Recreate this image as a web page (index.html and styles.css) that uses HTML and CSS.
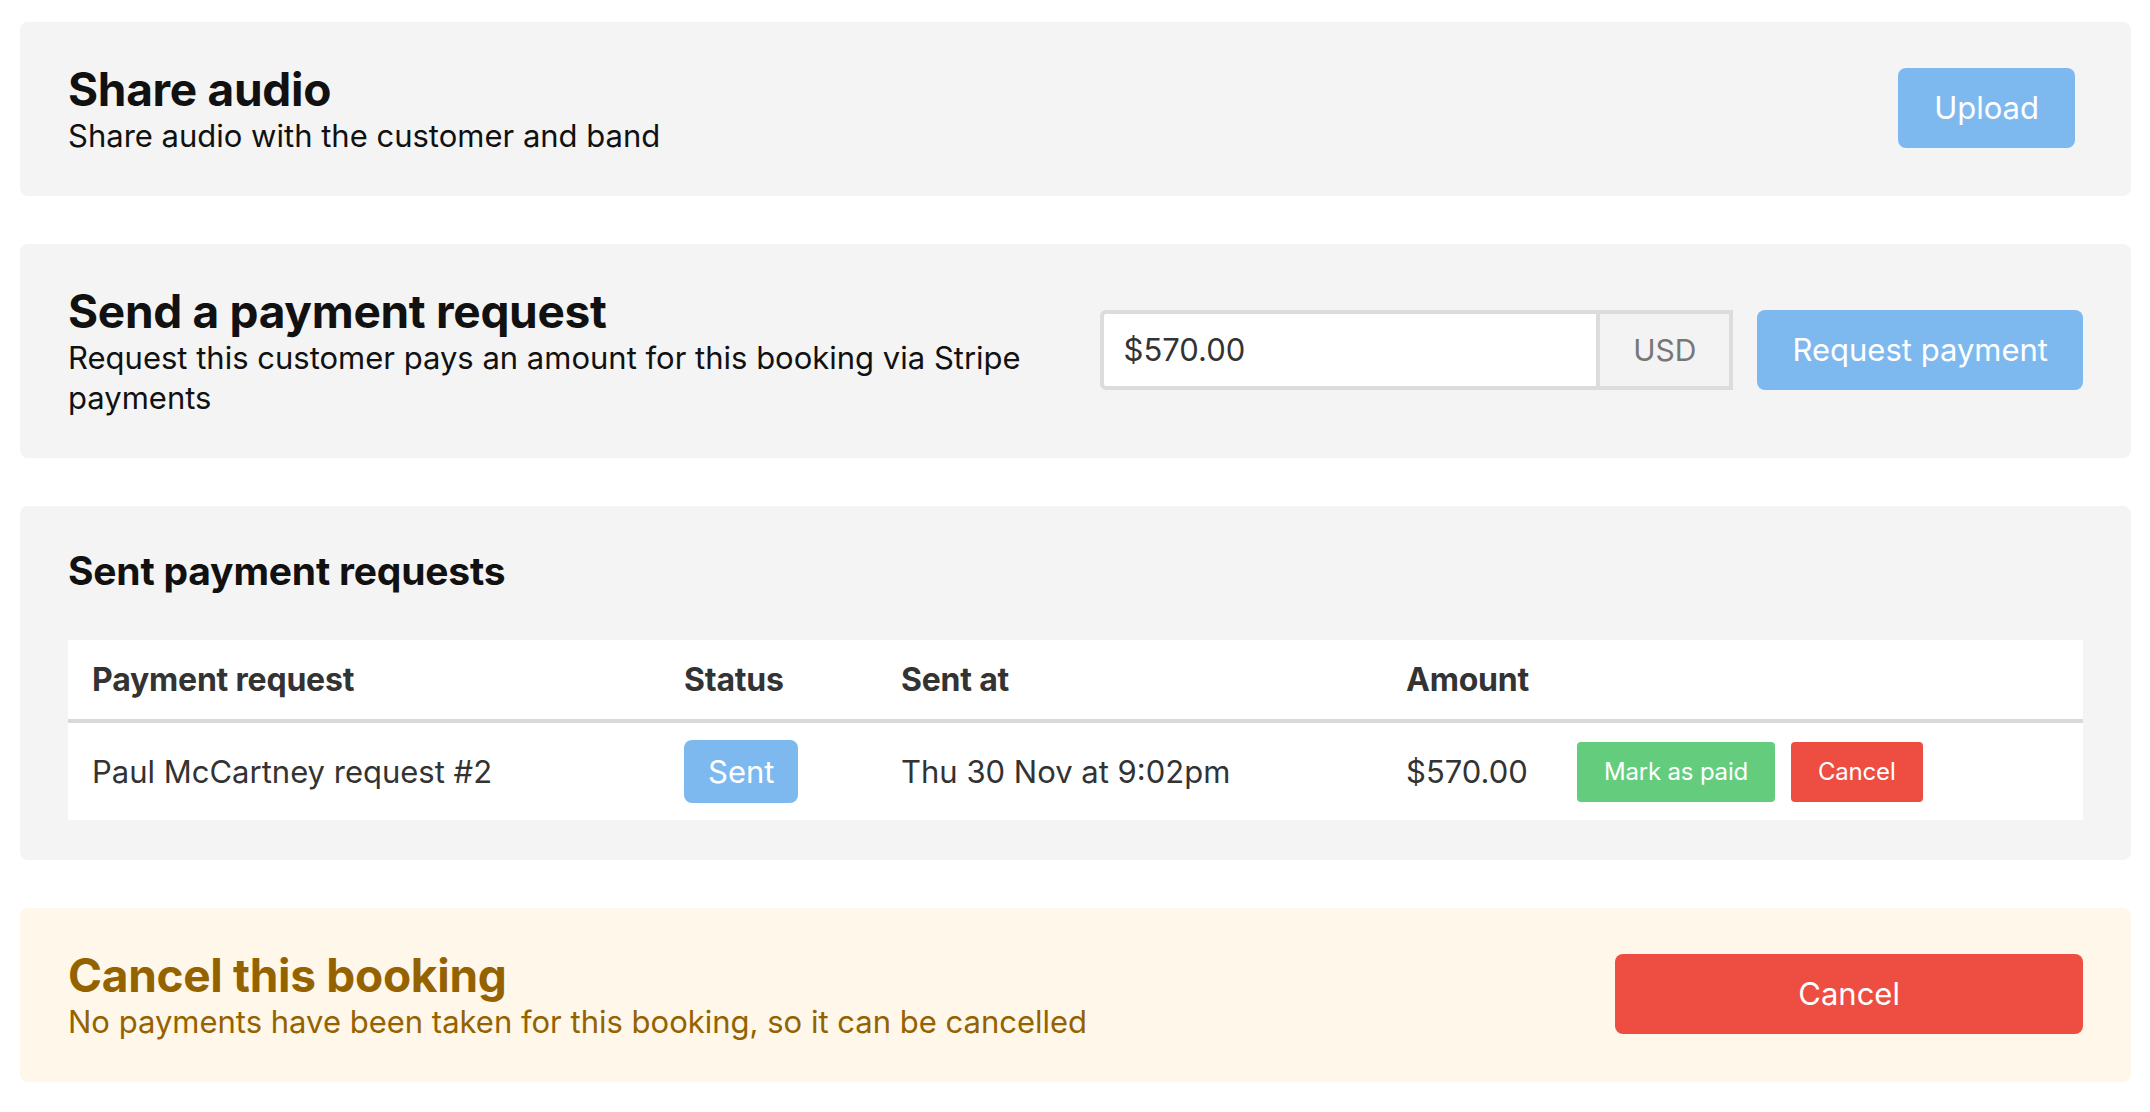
FILE: index.html
```html
<!DOCTYPE html>
<html lang="en">
<head>
<meta charset="utf-8">
<title>Booking</title>
<link rel="stylesheet" href="styles.css">
</head>
<body>
<main class="page">
  <section class="card">
    <div class="card-text">
      <h2 class="card-title">Share audio</h2>
      <p class="card-sub">Share audio with the customer and band</p>
    </div>
    <div class="card-action">
      <button class="btn btn-blue btn-upload">Upload</button>
    </div>
  </section>

  <section class="card card-split">
    <div class="card-text">
      <h2 class="card-title">Send a payment request</h2>
      <p class="card-sub">Request this customer pays an amount for this booking via Stripe payments</p>
    </div>
    <form class="pay-form">
      <div class="amount-field">
        <input class="amount-input" type="text" value="$570.00">
        <span class="currency">USD</span>
      </div>
      <button type="button" class="btn btn-blue btn-request">Request payment</button>
    </form>
  </section>

  <section class="card card-table">
    <h3 class="section-title">Sent payment requests</h3>
    <table class="requests">
      <colgroup>
        <col class="c-name"><col class="c-status"><col class="c-sent"><col class="c-amount"><col class="c-actions">
      </colgroup>
      <thead>
        <tr><th>Payment request</th><th>Status</th><th>Sent at</th><th>Amount</th><th></th></tr>
      </thead>
      <tbody>
        <tr>
          <td>Paul McCartney request #2</td>
          <td><span class="badge">Sent</span></td>
          <td>Thu 30 Nov at 9:02pm</td>
          <td>$570.00</td>
          <td class="actions"><button class="btn-sm btn-green">Mark as paid</button><button class="btn-sm btn-red">Cancel</button></td>
        </tr>
      </tbody>
    </table>
  </section>

  <section class="card card-warn">
    <div class="card-text warn-text">
      <h2 class="card-title warn-title">Cancel this booking</h2>
      <p class="card-sub warn-sub">No payments have been taken for this booking, so it can be cancelled</p>
    </div>
    <button class="btn btn-red btn-cancel">Cancel</button>
  </section>
</main>
</body>
</html>
```

FILE: styles.css
```css
* { box-sizing: border-box; }

html, body {
  margin: 0;
  background: #ffffff;
}

body {
  font-family: Inter, "Noto Sans", "Liberation Sans", sans-serif;
  color: #111111;
}

.page {
  padding: 22px 19px 0 20px;
  display: flex;
  flex-direction: column;
  gap: 48px;
}

.card {
  background: #f4f4f4;
  border-radius: 8px;
  padding: 37px 48px 40px;
  display: grid;
  grid-template-columns: repeat(4, 1fr);
  column-gap: 48px;
  align-items: center;
}

.card-text {
  grid-column: span 2;
  padding-top: 4px;
}

.card-action {
  grid-column: span 2;
  display: flex;
  justify-content: flex-end;
}

.card-title {
  margin: 0;
  font-size: 46px;
  line-height: 53px;
  font-weight: 700;
  color: #111111;
  letter-spacing: -0.3px;
}

.card-sub {
  margin: 0;
  font-size: 31px;
  line-height: 40px;
  color: #111111;
}

.btn {
  border: 0;
  border-radius: 8px;
  color: #ffffff;
  font-family: inherit;
  font-size: 31px;
  line-height: 40px;
  padding: 20px 36px;
  white-space: nowrap;
  cursor: pointer;
}

.btn-blue { background: #7db9ef; }
.btn-red { background: #ee4e41; }

.btn-upload { margin-right: 8px; }

.pay-form {
  grid-column: span 2;
  display: flex;
  align-items: stretch;
  gap: 24px;
}

.amount-field {
  flex: 1;
  min-width: 0;
  display: flex;
}

.amount-input {
  flex: 1;
  min-width: 0;
  height: 80px;
  border: 4px solid #dcdcdc;
  border-right-width: 2px;
  border-radius: 6px 0 0 6px;
  background: #ffffff;
  padding: 0 20px;
  font-family: inherit;
  font-size: 31px;
  color: #333333;
}

.currency {
  display: flex;
  align-items: center;
  height: 80px;
  border: 4px solid #dcdcdc;
  border-left-width: 2px;
  background: #f3f3f3;
  padding: 0 33px;
  font-size: 30px;
  color: #777777;
}

.btn-request {
  flex-shrink: 0;
  height: 80px;
  padding: 0 35px;
}

.card-table {
  display: block;
  padding-top: 41px;
}

.section-title {
  margin: 0 0 45px;
  font-size: 39px;
  line-height: 48px;
  font-weight: 700;
  color: #111111;
  letter-spacing: -0.2px;
}

.requests {
  width: 100%;
  border-collapse: collapse;
  background: #ffffff;
}

.c-name { width: 592px; }
.c-status { width: 217px; }
.c-sent { width: 505px; }
.c-amount { width: 170px; }

.requests th {
  text-align: left;
  font-size: 32px;
  font-weight: 700;
  color: #333333;
  height: 81px;
  padding: 0 24px;
  border-bottom: 4px solid #d9d9d9;
  letter-spacing: -0.2px;
}

.requests td {
  font-size: 31px;
  color: #333333;
  height: 99px;
  padding: 0 24px;
}

.badge {
  display: inline-block;
  background: #7db9ef;
  color: #ffffff;
  border-radius: 8px;
  padding: 11px 24px;
  line-height: 41px;
}

.actions {
  white-space: nowrap;
}

.btn-sm {
  border: 0;
  border-radius: 4px;
  color: #ffffff;
  font-family: inherit;
  font-size: 24px;
  line-height: 32px;
  padding: 14px 27px;
  margin-right: 16px;
  letter-spacing: -0.2px;
}

.btn-green { background: #64cd7d; }

.card-warn {
  background: #fef7ea;
}

.warn-text { grid-column: span 3; }

.warn-title, .warn-sub { color: #946300; }

.btn-cancel {
  grid-column: span 1;
  height: 80px;
  padding: 0 24px;
}
```
